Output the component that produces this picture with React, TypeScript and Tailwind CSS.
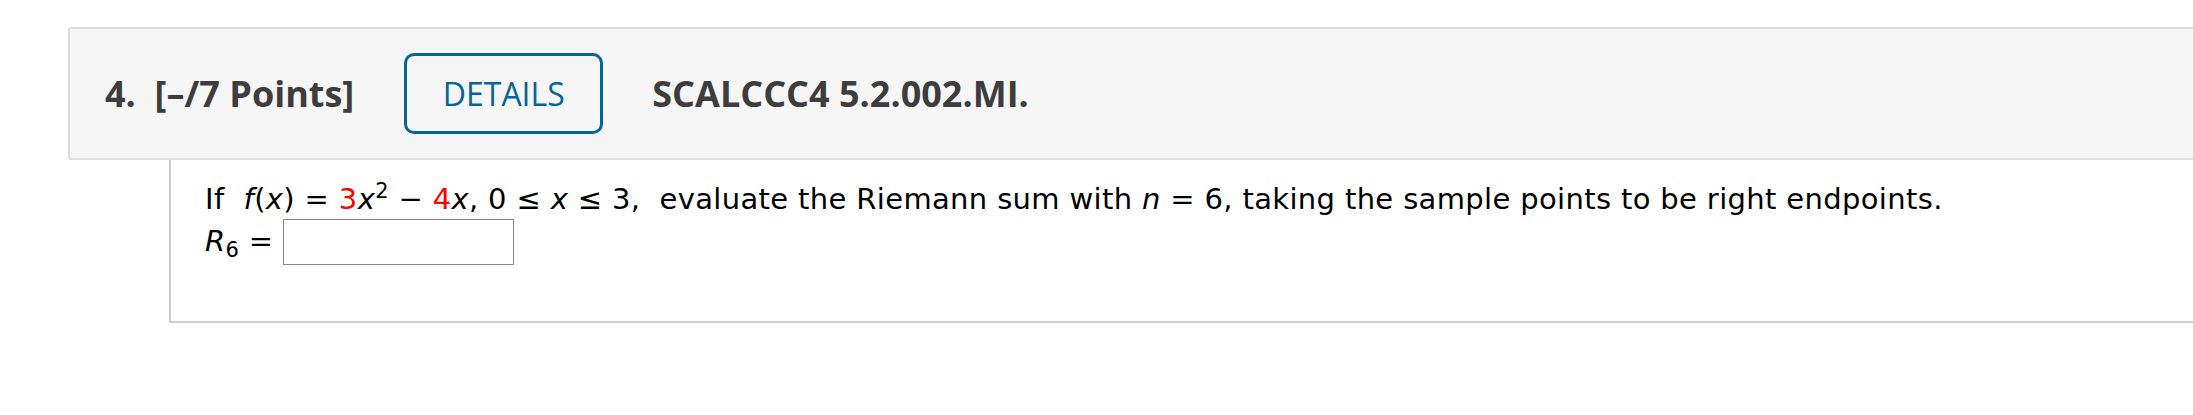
import React from "react";

export default function App() {
  return (
    <div className="w-[2193px] h-[415px] bg-white overflow-hidden relative">
      <div className="pt-[27px]">
        <div
          className="ml-[68px] w-[2200px] h-[133px] bg-[#f6f6f6] border-2 border-[#dedede] rounded-[3px] flex items-center pl-[35px]"
          style={{ fontFamily: '"Open Sans", sans-serif' }}
        >
          <span className="text-[36px] font-bold text-[#3d3d3d] leading-none whitespace-pre">
            4.{"  "}[–/7 Points]
          </span>
          <div className="ml-[50px] w-[199px] h-[81px] border-[3px] border-[#08639c] rounded-[10px] flex items-center justify-center">
            <span className="text-[32px] text-[#08639c] leading-none">DETAILS</span>
          </div>
          <span className="ml-[49px] text-[36px] font-bold text-[#3d3d3d] leading-none">
            SCALCCC4 5.2.002.MI.
          </span>
        </div>
        <div
          className="ml-[169px] w-[2100px] h-[163px] border-l-2 border-b-2 border-[#cfcfcf] pl-[34px] pt-[19px] text-[29px] tracking-[0.35px] text-black"
          style={{ fontFamily: '"DejaVu Sans", Verdana, sans-serif' }}
        >
          <div className="leading-[40px] whitespace-pre">
            If{"  "}<i>f</i>(<i>x</i>) = <span className="text-[#ff0000]">3</span><i>x</i>
            <sup className="text-[21px] relative -top-[11px]">2</sup> − <span className="text-[#ff0000]">4</span><i>x</i>, 0 ≤ <i>x</i> ≤ 3,{"  "}evaluate the Riemann sum with <i>n</i> = 6, taking the sample points to be right endpoints.
          </div>
          <div className="flex items-center whitespace-pre">
            <span>
              <i>R</i>
              <sub className="text-[21px]">6</sub> ={" "}
            </span>
            <div className="ml-[0px] w-[231px] h-[46px] border border-[#8a8a8a] bg-white" />
          </div>
        </div>
      </div>
    </div>
  );
}
